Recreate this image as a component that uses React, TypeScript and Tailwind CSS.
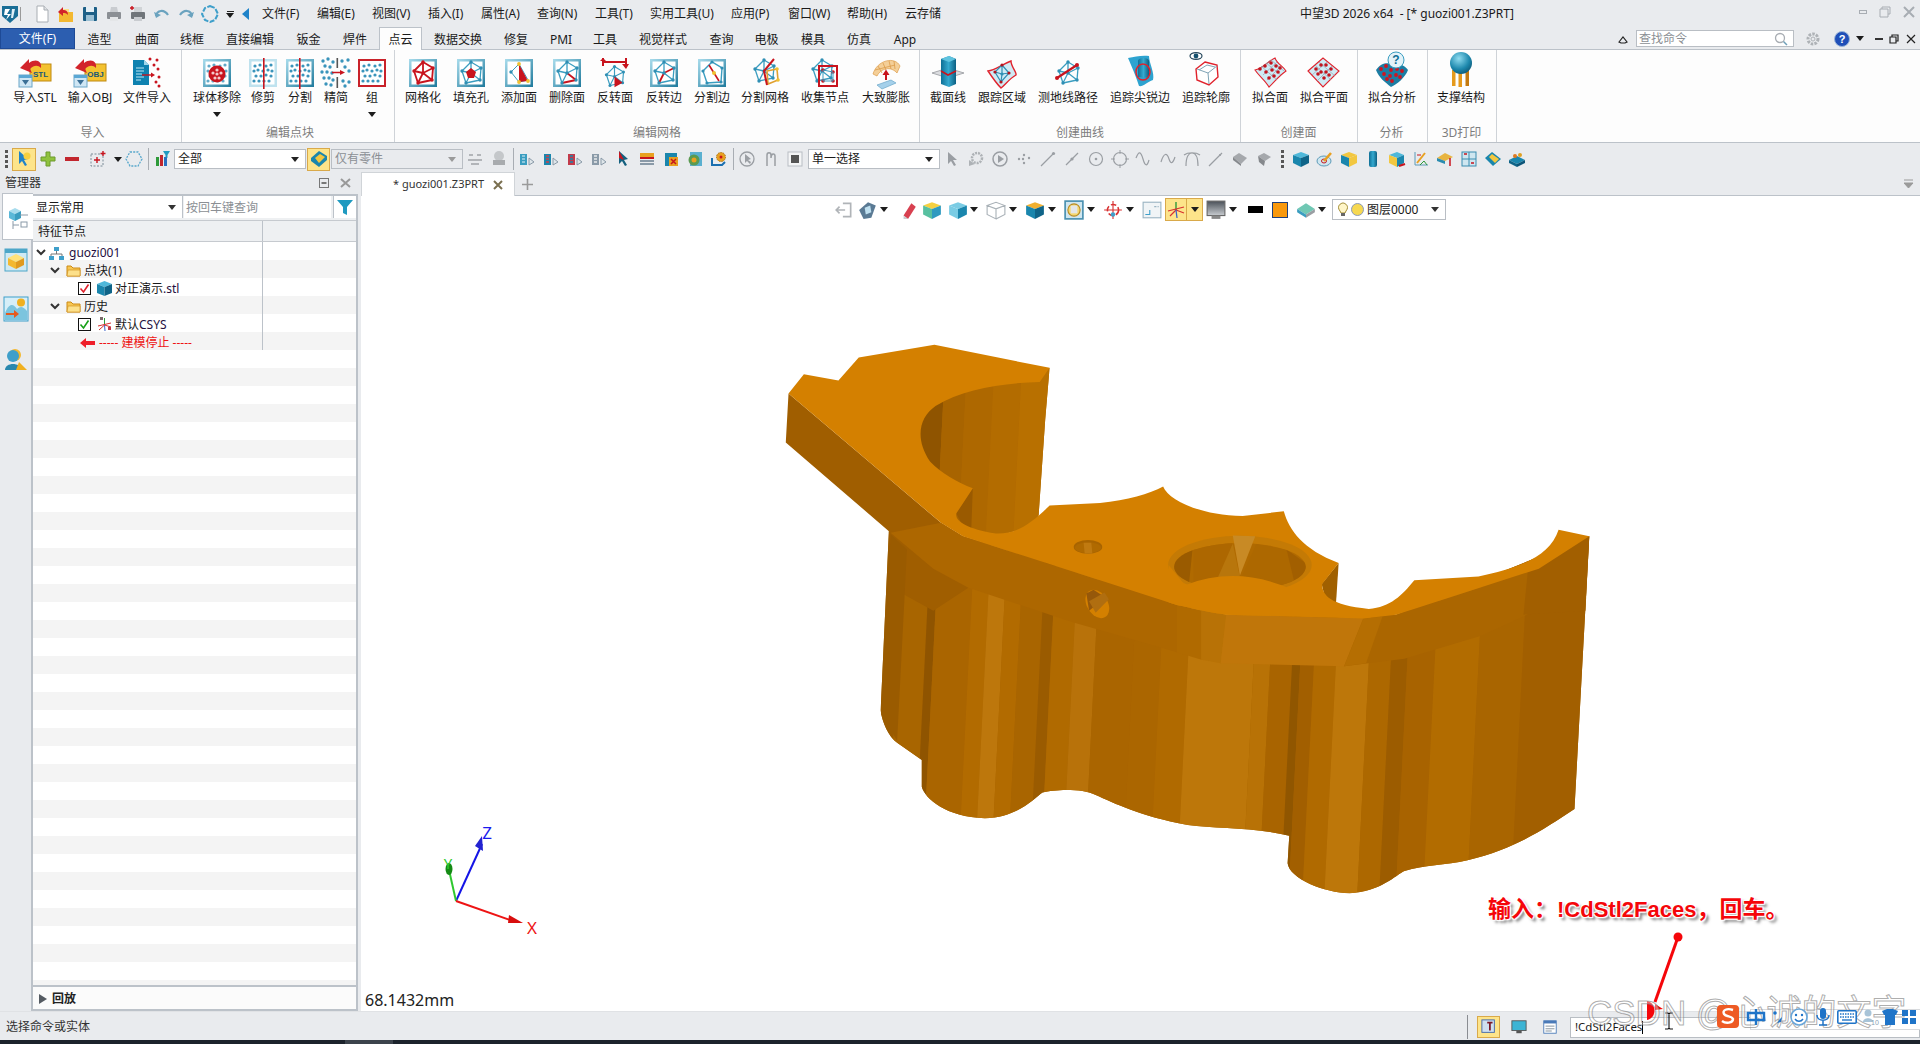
import React from "react";

const T = "#3a9dc0";
const R = "#c8141e";

const Defs = () => (
  <svg width="0" height="0" className="absolute">
    <defs>
      <linearGradient id="fr" x1="0" y1="0" x2="1" y2="1">
        <stop offset="0" stopColor="#a9dcec" />
        <stop offset="1" stopColor="#1f7a9c" />
      </linearGradient>
      <linearGradient id="blk" x1="0" y1="0" x2="1" y2="0">
        <stop offset="0" stopColor="#0f6f96" />
        <stop offset="0.5" stopColor="#35a9cf" />
        <stop offset="1" stopColor="#0c5f82" />
      </linearGradient>
      <radialGradient id="sph" cx="0.4" cy="0.3" r="0.8">
        <stop offset="0" stopColor="#8fdcf0" />
        <stop offset="0.6" stopColor="#1d88ad" />
        <stop offset="1" stopColor="#0b4f6c" />
      </radialGradient>
      <linearGradient id="mon" x1="0" y1="0" x2="0" y2="1">
        <stop offset="0" stopColor="#4a5058" />
        <stop offset="1" stopColor="#c8ccd0" />
      </linearGradient>
    </defs>
  </svg>
);

const Ic = ({ children, w = 30, h = 30 }: { children: React.ReactNode; w?: number; h?: number }) => (
  <svg width={w} height={h} viewBox={`0 0 ${w} ${h}`} className="block shrink-0 overflow-visible">
    {children}
  </svg>
);

const Frame = ({ children }: { children?: React.ReactNode }) => (
  <Ic>
    <rect x="1" y="1" width="28" height="28" fill="url(#fr)" />
    <rect x="3.5" y="3.5" width="23" height="23" fill="#fff" />
    {children}
  </Ic>
);

const PTS = [
  [15, 4],
  [25, 10],
  [24, 22],
  [10, 25],
  [6, 13],
  [15, 15],
];
const EDGES: [number, number][] = [
  [0, 1],
  [1, 2],
  [2, 3],
  [3, 4],
  [4, 0],
  [5, 0],
  [5, 1],
  [5, 2],
  [5, 3],
  [5, 4],
];

const Net = ({ red = [], yellow = [], dx = 0, dy = 0 }: { red?: number[]; yellow?: number[]; dx?: number; dy?: number }) => (
  <g transform={`translate(${dx} ${dy})`}>
    {EDGES.map((e, i) => (
      <line
        key={i}
        x1={PTS[e[0]][0]}
        y1={PTS[e[0]][1]}
        x2={PTS[e[1]][0]}
        y2={PTS[e[1]][1]}
        stroke={red.includes(i) ? R : T}
        strokeWidth={red.includes(i) ? 1.8 : 1.3}
      />
    ))}
    {PTS.map((p, i) => (
      <circle key={i} cx={p[0]} cy={p[1]} r="1.7" fill={yellow.includes(i) ? "#f0c030" : red.length > 4 ? R : "#2f8fb4"} />
    ))}
  </g>
);

const DOTS = [
  [7, 8],
  [12, 7],
  [18, 8],
  [23, 7],
  [6, 13],
  [10, 12],
  [15, 13],
  [20, 12],
  [24, 13],
  [8, 18],
  [13, 18],
  [18, 17],
  [23, 18],
  [6, 23],
  [11, 23],
  [16, 23],
  [21, 23],
];
const Dots = ({ o = 1 }: { o?: number }) => (
  <g opacity={o}>
    {DOTS.map((d, i) => (
      <circle key={i} cx={d[0]} cy={d[1]} r="1.6" fill="#3a94bb" />
    ))}
  </g>
);

const ImportIcon = ({ label }: { label: string }) => (
  <Ic w={34} h={32}>
    <rect x="12" y="8" width="21" height="17" fill="#f3c230" stroke="#c08a10" />
    <text x="22.5" y="21" textAnchor="middle" fontSize="8" fontWeight="700" fill="#16587a" fontFamily="Liberation Sans">
      {label}
    </text>
    <path d="M2 12 L11 3 L11 7 C18 2 24 5 23 12 C20 9 16 9 12 13 L14 17 Z" fill="#d2232a" />
    <rect x="1" y="19" width="13" height="12" fill="#cfe6f4" stroke="#6aa6c8" />
    <rect x="1" y="19" width="13" height="3" fill="#5aa7d4" />
    <path d="M4 24 L11 24 L7.5 29 Z" fill="#3b6f96" />
  </Ic>
);

const FileImport = () => (
  <Ic w={34} h={32}>
    <path d="M3 4 L14 4 L19 9 L19 29 L3 29 Z" fill="#0f82b0" />
    <path d="M14 4 L19 9 L14 9 Z" fill="#9fd6ea" />
    <path d="M6 12 H14 M6 15 H14 M6 18 H12 M6 21 H14 M6 24 H11" stroke="#bfe7f4" strokeWidth="1" />
    <path d="M12 19 H22" stroke={R} strokeWidth="1.4" />
    <path d="M21 16.5 L25 19 L21 21.5 Z" fill={R} />
    <g fill={R}>
      <circle cx="20" cy="3" r="1.5" />
      <circle cx="27" cy="4" r="1.5" />
      <circle cx="24" cy="9" r="1.5" />
      <circle cx="28" cy="13" r="1.5" />
      <circle cx="29" cy="21" r="1.5" />
      <circle cx="26" cy="26" r="1.5" />
      <circle cx="29" cy="30" r="1.5" />
    </g>
  </Ic>
);

const icons: Record<string, React.ReactNode> = {
  stl: <ImportIcon label="STL" />,
  obj: <ImportIcon label="OBJ" />,
  file: <FileImport />,
  sphere: (
    <Frame>
      <Dots o={0.8} />
      <circle cx="15" cy="16" r="8.5" fill={R} />
      {[[15, 12], [11, 15], [19, 15], [13, 20], [17, 20], [15, 16]].map((d, i) => (
        <circle key={i} cx={d[0]} cy={d[1]} r="1.6" fill="#f4c9cb" />
      ))}
    </Frame>
  ),
  trim: (
    <Ic>
      <rect x="1" y="1" width="28" height="28" fill="#bfe2ee" />
      <rect x="3.5" y="3.5" width="23" height="23" fill="#fff" />
      <Dots />
      <rect x="15" y="0" width="1.6" height="31" fill={R} />
    </Ic>
  ),
  split: (
    <Frame>
      <Dots />
      <rect x="14" y="0" width="1.6" height="31" fill={R} />
    </Frame>
  ),
  simplify: (
    <Ic>
      <g fill="#3a94bb">
        {[[2, 3], [7, 1], [12, 4], [4, 8], [9, 9], [1, 14], [6, 14], [11, 15], [3, 20], [8, 20], [12, 22], [5, 26], [10, 27], [21, 3], [27, 2], [24, 9], [28, 13], [22, 23], [28, 24], [24, 28]].map((d, i) => (
          <circle key={i} cx={d[0]} cy={d[1]} r="1.7" />
        ))}
      </g>
      <rect x="15.5" y="0" width="1.6" height="10" fill="#555" />
      <rect x="15.5" y="19" width="1.6" height="11" fill="#555" />
      <path d="M11 14.5 H20" stroke={R} strokeWidth="1.5" />
      <path d="M19 12 L24 14.5 L19 17 Z" fill={R} />
    </Ic>
  ),
  group: (
    <Ic>
      <rect x="2" y="2" width="26" height="26" fill="#fff" stroke="#c9222a" strokeWidth="2" />
      <Dots />
    </Ic>
  ),
  meshify: (
    <Frame>
      <Net red={[0, 1, 2, 3, 4, 5, 6, 7, 8, 9]} />
    </Frame>
  ),
  fill: (
    <Frame>
      <Net />
      <path d="M15 10 L20 14 L18 20 L12 20 L10 14 Z" fill={R} />
    </Frame>
  ),
  addf: (
    <Frame>
      <path d="M7 14 L15 6 L24 22 L15 24 Z" fill="none" stroke={T} />
      <path d="M15 6 L24 23 L15 24 Z" fill={R} />
      <g fill="#f0c030">
        <circle cx="15" cy="6" r="1.9" />
        <circle cx="24" cy="23" r="1.9" />
        <circle cx="15" cy="24" r="1.9" />
      </g>
      <circle cx="7" cy="14" r="1.7" fill="#2f8fb4" />
    </Frame>
  ),
  delf: (
    <Frame>
      <Net red={[7, 2]} />
    </Frame>
  ),
  flipf: (
    <Ic>
      <path d="M3 0 V8 M3 4 H26 M26 0 V9" stroke={R} strokeWidth="2" />
      <path d="M0 3 L3 0 L6 3 Z" fill={R} />
      <path d="M22 6 L29 6 L26 11 Z" fill={R} />
      <g transform="translate(1 5) scale(0.9)">
        <Net />
        <path d="M15 15 L24 22 L15 27 Z" fill={R} />
      </g>
    </Ic>
  ),
  flipe: (
    <Frame>
      <Net red={[6, 8]} />
    </Frame>
  ),
  splite: (
    <Frame>
      <path d="M6 13 L15 4 L25 10 L24 24 L10 25 Z" fill="none" stroke={T} strokeWidth="1.4" />
      <path d="M12 7 L22 23" stroke={R} strokeWidth="1.6" />
      <circle cx="17" cy="15" r="2" fill="#f0c030" />
      {[[6, 13], [15, 4], [25, 10], [24, 24], [10, 25]].map((d, i) => (
        <circle key={i} cx={d[0]} cy={d[1]} r="1.6" fill="#2f8fb4" />
      ))}
    </Frame>
  ),
  splitm: (
    <Ic w={30} h={32}>
      <Net dx={-1} dy={0} />
      <path d="M17 15 L27 13 L28 24 L18 28 Z" fill="none" stroke="#e0a030" strokeWidth="1.6" />
      <path d="M24 3 L14 15 L17 29" fill="none" stroke={R} strokeWidth="2" />
      <circle cx="27" cy="13" r="1.8" fill="#f0c030" />
      <circle cx="28" cy="24" r="1.8" fill="#f0c030" />
    </Ic>
  ),
  collect: (
    <Ic>
      <Net dx={-3} dy={-2} />
      <rect x="9" y="8" width="18" height="20" fill="none" stroke={R} strokeWidth="2" />
      <g fill={R}>
        <circle cx="13" cy="12" r="1.8" />
        <circle cx="23" cy="14" r="1.8" />
        <circle cx="13" cy="23" r="1.8" />
        <circle cx="23" cy="23" r="1.8" />
      </g>
      <path d="M13 12 L23 14 L23 23 L13 23 Z" fill="none" stroke={T} />
    </Ic>
  ),
  inflate: (
    <Ic>
      <path d="M2 16 C6 2 24 -2 29 8 L26 15 C20 8 10 10 6 18 Z" fill="#f4cf98" stroke="#dc9c4a" strokeWidth="0.7" />
      <path d="M7 8 L11 15 M12 5 L15 12 M18 3 L20 11 M23 3 L24 11 M4 12 L24 7" stroke="#dc9c4a" strokeWidth="0.8" />
      <path d="M15 22 V15" stroke={R} strokeWidth="2" />
      <path d="M11.5 17 L15 11.5 L18.5 17 Z" fill={R} />
      <path d="M6 27 L20 22 L25 25 L11 31 Z" fill="#a5d0ea" stroke="#6aa6c8" strokeWidth="0.7" />
    </Ic>
  ),
  section: (
    <Ic w={34} h={32}>
      <path d="M1 17 L17 12 L33 17 L17 22 Z" fill="#dcdde0" stroke="#8a8d92" strokeWidth="0.7" />
      <path d="M10 3 L18 0 L25 3 L25 28 L18 31 L10 28 Z" fill="url(#blk)" />
      <path d="M10 3 L18 0 L25 3 L18 6 Z" fill="#5fc3df" />
      <path d="M10 15 L17 19 L25 15" fill="none" stroke={R} strokeWidth="1.6" />
    </Ic>
  ),
  region: (
    <Ic>
      <path d="M1 13 C8 12 14 7 24 3 C24 9 30 14 29 17 C22 21 18 27 14 30 C10 26 5 19 1 13 Z" fill="#cfeaf4" stroke="#e0222c" strokeWidth="1.4" />
      <path d="M15 7 L22 15 L14 24 L8 14 Z M15 7 L15 16 M22 15 L15 16 M14 24 L15 16 M8 14 L15 16" fill="none" stroke="#2f8fb4" strokeWidth="1.2" />
      <g fill="#b01620">
        <circle cx="15" cy="7" r="1.6" />
        <circle cx="22" cy="15" r="1.6" />
        <circle cx="14" cy="24" r="1.6" />
        <circle cx="8" cy="14" r="1.6" />
      </g>
      <circle cx="15" cy="16" r="1.6" fill="#2f8fb4" />
    </Ic>
  ),
  geo: (
    <Ic>
      <Net />
      <path d="M4 20 L24 7" stroke={R} strokeWidth="2.2" />
      <circle cx="4" cy="20" r="2" fill={R} />
      <circle cx="24" cy="7" r="2" fill={R} />
    </Ic>
  ),
  sharp: (
    <Ic w={30} h={33}>
      <path d="M3 3 C10 2 16 0 24 1 C24 8 30 18 28 25 C22 27 18 32 14 31 C12 24 7 12 3 3 Z" fill="#2da3d0" />
      <path d="M13 6 C13 2 24 2 24 6 L24 23 L13 22 Z" fill="url(#blk)" />
      <ellipse cx="18" cy="17" rx="7" ry="8" fill="none" stroke="#e0222c" strokeWidth="1.5" />
    </Ic>
  ),
  trace: (
    <Ic w={36} h={36}>
      <ellipse cx="8" cy="4" rx="6" ry="3.4" fill="#fff" stroke="#26475c" strokeWidth="1.2" />
      <circle cx="8" cy="4" r="2.4" fill="#14506e" />
      <path d="M17 10 L29 13 L30 25 L21 33 L9 28 L8 17 Z" fill="#fff" stroke="#e0222c" strokeWidth="1.4" />
      <path d="M9 17 L20 21 L29 14 M20 21 L21 32 M11 18 L19 13 L27 15" fill="none" stroke="#7fa4b6" strokeWidth="1" />
    </Ic>
  ),
  fit: (
    <Ic w={34} h={32}>
      <path d="M2 14 C10 12 14 6 22 2 C24 8 30 10 33 15 C26 20 22 25 16 31 C12 24 6 20 2 14 Z" fill="#cfeaf4" stroke="#e0222c" strokeWidth="1.1" />
      <path d="M8 10 L24 24 M13 7 L28 19 M18 4 L31 15 M5 14 L18 4 M10 19 L24 6 M14 24 L28 10" stroke="#8a9aa8" strokeWidth="0.6" />
      {[[7, 13], [12, 10], [18, 7], [23, 10], [13, 16], [19, 14], [25, 16], [16, 22], [21, 20], [27, 12]].map((d, i) => (
        <circle key={i} cx={d[0]} cy={d[1]} r="1.8" fill="#c2141e" />
      ))}
    </Ic>
  ),
  fitp: (
    <Ic w={34} h={32}>
      <path d="M1 15 L16 2 L32 15 L16 31 Z" fill="#cfeaf4" stroke="#e0222c" strokeWidth="1.1" />
      <path d="M8 9 L24 24 M12 6 L28 20 M20 6 L5 19 M25 10 L10 25" stroke="#8a9aa8" strokeWidth="0.6" />
      {[[9, 13], [14, 9], [19, 9], [14, 16], [19, 16], [24, 13], [17, 22], [22, 19], [11, 18]].map((d, i) => (
        <circle key={i} cx={d[0]} cy={d[1]} r="1.8" fill="#c2141e" />
      ))}
    </Ic>
  ),
  analyze: (
    <Ic w={34} h={36}>
      <path d="M1 18 C6 10 14 10 20 13 C25 11 30 14 33 18 C30 26 22 32 16 35 C10 30 4 26 1 18 Z" fill="#1c7da3" />
      {[[6, 17], [11, 14], [16, 18], [22, 17], [27, 19], [9, 22], [15, 24], [21, 23], [17, 29], [25, 25], [12, 27]].map((d, i) => (
        <circle key={i} cx={d[0]} cy={d[1]} r="1.9" fill="#cf1520" />
      ))}
      <circle cx="21" cy="8" r="8" fill="#e4f3f9" stroke="#3a9dc0" />
      <text x="21" y="12" textAnchor="middle" fontSize="12" fontWeight="700" fill="#0f6f96" fontFamily="Liberation Sans">
        ?
      </text>
    </Ic>
  ),
  support: (
    <Ic w={30} h={36}>
      <rect x="6" y="18" width="3.5" height="16" fill="#e59a1c" />
      <rect x="12.5" y="18" width="3.5" height="17" fill="#e59a1c" />
      <rect x="19.5" y="18" width="3.5" height="16" fill="#c47a10" />
      <circle cx="15" cy="11" r="11" fill="url(#sph)" />
    </Ic>
  ),
};

type Item = [string, string, string, boolean?];
type Group = { label: string; cls: string; items: Item[] };

const groups: Group[] = [
  {
    label: "导入",
    cls: "w-[182px] pl-2",
    items: [
      ["导入STL", "stl", "w-[54px]"],
      ["输入OBJ", "obj", "w-[56px]"],
      ["文件导入", "file", "w-[58px]"],
    ],
  },
  {
    label: "编辑点块",
    cls: "w-[213px] pl-2",
    items: [
      ["球体移除", "sphere", "w-[54px]", true],
      ["修剪", "trim", "w-[38px]"],
      ["分割", "split", "w-[36px]"],
      ["精简", "simplify", "w-[36px]"],
      ["组", "group", "w-[36px]", true],
    ],
  },
  {
    label: "编辑网格",
    cls: "w-[525px] pl-1",
    items: [
      ["网格化", "meshify", "w-[48px]"],
      ["填充孔", "fill", "w-[48px]"],
      ["添加面", "addf", "w-[48px]"],
      ["删除面", "delf", "w-[48px]"],
      ["反转面", "flipf", "w-[48px]"],
      ["反转边", "flipe", "w-[50px]"],
      ["分割边", "splite", "w-[46px]"],
      ["分割网格", "splitm", "w-[60px]"],
      ["收集节点", "collect", "w-[60px]"],
      ["大致膨胀", "inflate", "w-[62px]"],
    ],
  },
  {
    label: "创建曲线",
    cls: "w-[321px] pl-1",
    items: [
      ["截面线", "section", "w-[48px]"],
      ["跟踪区域", "region", "w-[60px]"],
      ["测地线路径", "geo", "w-[72px]"],
      ["追踪尖锐边", "sharp", "w-[72px]"],
      ["追踪轮廓", "trace", "w-[60px]"],
    ],
  },
  {
    label: "创建面",
    cls: "w-[117px] pl-[3px]",
    items: [
      ["拟合面", "fit", "w-[52px]"],
      ["拟合平面", "fitp", "w-[56px]"],
    ],
  },
  { label: "分析", cls: "w-[70px] pl-0.5", items: [["拟合分析", "analyze", "w-[64px]"]] },
  { label: "3D打印", cls: "w-[69px] pl-[3px]", items: [["支撑结构", "support", "w-[60px]"]] },
];

const Arrow = ({ c = "#1c1c1c" }: { c?: string }) => (
  <svg width="8" height="5" viewBox="0 0 8 5" className="block shrink-0">
    <path d="M0 0 H8 L4 5 Z" fill={c} />
  </svg>
);

const Sm = ({ children, s = 18 }: { children: React.ReactNode; s?: number }) => (
  <svg width={s} height={s} viewBox="0 0 18 18" className="block shrink-0">
    {children}
  </svg>
);

const Cube = ({ top = "#4fb8da", left = "#1a86ad", right = "#0f6488", s = 18 }: { top?: string; left?: string; right?: string; s?: number }) => (
  <Sm s={s}>
    <path d="M1 5 L9 2 L17 5 L9 8 Z" fill={top} />
    <path d="M1 5 L9 8 V17 L1 13 Z" fill={left} />
    <path d="M17 5 L9 8 V17 L17 13 Z" fill={right} />
  </Sm>
);

const Cell = ({ children, cls = "w-6" }: { children: React.ReactNode; cls?: string }) => (
  <div className={`${cls} h-full flex items-center justify-center shrink-0`}>{children}</div>
);

const Grip = () => (
  <div className="w-[3px] flex flex-col gap-[2px] shrink-0">
    <span className="block w-[3px] h-[3px] bg-[#555]" />
    <span className="block w-[3px] h-[3px] bg-[#555]" />
    <span className="block w-[3px] h-[3px] bg-[#555]" />
    <span className="block w-[3px] h-[3px] bg-[#555]" />
  </div>
);

const TSep = ({ cls = "" }: { cls?: string }) => <div className={`w-px h-[22px] bg-[#a8adb3] shrink-0 ${cls}`} />;

const Combo = ({ text, cls, gray }: { text: string; cls: string; gray?: boolean }) => (
  <div className={`${cls} h-[20px] shrink-0 flex items-center justify-between pl-[3px] pr-[6px] border border-[#b9bec4] ${gray ? "bg-[#e9ebee] text-[#8b8f94]" : "bg-white text-[#1a1a1a]"}`}>
    <span className="leading-none">{text}</span>
    <Arrow c={gray ? "#9a9a9a" : "#222"} />
  </div>
);

const g1 = "#aeb2b6";
const disabled: React.ReactNode[] = [
  <Sm key="a"><path d="M5 2 L5 14 L8 11 L11 16 L13 15 L10 10 L14 10 Z" fill="#9a9ea3" /></Sm>,
  <Sm key="b"><circle cx="10" cy="8" r="5" fill="none" stroke={g1} strokeWidth="2.5" strokeDasharray="2 1" /><path d="M2 10 L2 16 L8 14 Z" fill={g1} /></Sm>,
  <Sm key="c"><circle cx="9" cy="9" r="7" fill="none" stroke="#9a9ea3" strokeWidth="1.5" /><path d="M7 5 L13 9 L7 13 Z" fill="#9a9ea3" /></Sm>,
  <Sm key="d"><g fill="#9a9ea3"><circle cx="4" cy="9" r="1.2" /><circle cx="9" cy="5" r="1.2" /><circle cx="9" cy="13" r="1.2" /><circle cx="14" cy="8" r="1.2" /><circle cx="8" cy="9" r="1.2" /></g></Sm>,
  <Sm key="e"><path d="M2 16 L14 4" stroke="#9a9ea3" strokeWidth="1.2" /><circle cx="14.5" cy="3.5" r="1.6" fill="#9a9ea3" /></Sm>,
  <Sm key="f"><path d="M3 15 L15 3" stroke="#9a9ea3" strokeWidth="1.2" /><circle cx="9" cy="9" r="1.6" fill="#9a9ea3" /></Sm>,
  <Sm key="g"><circle cx="9" cy="9" r="6.5" fill="none" stroke="#9a9ea3" strokeWidth="1.2" /><circle cx="9" cy="9" r="1.3" fill="#9a9ea3" /></Sm>,
  <Sm key="h"><circle cx="9" cy="9" r="6.5" fill="none" stroke="#9a9ea3" strokeWidth="1.2" /><path d="M9 0 V4 M9 14 V18 M0 9 H4 M14 9 H18" stroke="#9a9ea3" /></Sm>,
  <Sm key="i"><path d="M1 8 C4 0 6 2 8 9 C10 16 12 17 14 10" fill="none" stroke="#9a9ea3" strokeWidth="1.2" /></Sm>,
  <Sm key="j"><path d="M2 12 C5 2 8 3 10 9 C12 15 14 13 16 7" fill="none" stroke="#9a9ea3" strokeWidth="1.2" /></Sm>,
  <Sm key="k"><path d="M3 16 C3 6 6 3 9 3 C12 3 15 6 15 16 M1 5 C5 2 13 2 17 5" fill="none" stroke="#9a9ea3" strokeWidth="1.2" /></Sm>,
  <Sm key="l"><path d="M2 16 L15 3" stroke="#9a9ea3" strokeWidth="1.2" /><circle cx="13" cy="5" r="1" fill="#9a9ea3" /></Sm>,
  <Sm key="m"><path d="M2 7 L8 3 L16 8 L10 14 Z" fill="#a5a8ac" /><path d="M2 7 L10 14 V16 L2 10 Z" fill="#85888c" /></Sm>,
  <Sm key="n"><path d="M3 6 L9 3 L16 7 L10 11 Z" fill="#a5a8ac" /><path d="M3 6 L10 11 L9 16 L4 12 Z" fill="#85888c" /></Sm>,
];

const blue: React.ReactNode[] = [
  <Cube key="a" />,
  <Sm key="b"><ellipse cx="8" cy="11" rx="7" ry="5" fill="#cfe6f0" stroke="#5c9ab8" /><ellipse cx="8" cy="11" rx="2.5" ry="2" fill="none" stroke={R} /><path d="M8 11 L15 3" stroke="#e8a020" strokeWidth="2.5" /></Sm>,
  <Cube key="c" top="#f2c740" left="#1a86ad" right="#f2c740" />,
  <Sm key="d"><rect x="5" y="1" width="8" height="16" rx="2" fill="url(#blk)" /></Sm>,
  <Sm key="e"><path d="M1 5 L9 2 L16 5 L9 8 Z" fill="#4fb8da" /><path d="M1 5 L9 8 V17 L1 13 Z" fill="#f2c740" /><path d="M16 5 L9 8 V17 L16 13 Z" fill="#1a86ad" /><path d="M11 16 L17 14" stroke={R} strokeWidth="2" /></Sm>,
  <Sm key="f"><path d="M3 2 V15 H16" fill="none" stroke="#5c9ab8" /><path d="M5 13 L13 3" stroke="#e8a020" strokeWidth="2" /><path d="M5 5 H9" stroke={R} /><path d="M8 15 L12 11 L15 15" stroke="#2e9a3a" fill="none" /></Sm>,
  <Sm key="g"><path d="M1 8 L9 3 L17 7 L9 11 Z" fill="#e8b440" /><path d="M1 8 L9 11 V14 L1 11 Z" fill="#2a8cb0" /><path d="M14 8 V16" stroke={R} strokeWidth="1.5" /></Sm>,
  <Sm key="h"><rect x="2" y="2" width="14" height="14" fill="#cfe6f0" stroke="#3a8cb0" /><path d="M9 2 V16 M2 9 H16" stroke="#3a8cb0" /><path d="M4 4 H7 M11 13 H14" stroke={R} strokeWidth="1.5" /></Sm>,
  <Sm key="i"><path d="M1 8 L8 2 L17 9 L9 16 Z" fill="#1a86ad" /><path d="M5 7 L8 4 L15 9 L11 13 Z" fill="#f2c740" /></Sm>,
  <Sm key="j"><path d="M1 10 L9 6 L17 10 L9 14 Z" fill="#1a86ad" /><path d="M1 10 L9 14 V17 L1 13 Z" fill="#0f6488" /><path d="M17 10 L9 14 V17 L17 13 Z" fill="#0c5578" /><circle cx="7" cy="6" r="2" fill="#e07a20" /><circle cx="12" cy="5" r="2" fill="#e0a020" /></Sm>,
];

const midIcons: React.ReactNode[] = [
  <Sm key="a"><path d="M2 4 H9 V15 H2 Z" fill="#3a9dc0" /><path d="M4 6 H7 M4 9 H7 M4 12 H7" stroke="#dff2f8" strokeWidth="1.2" /><path d="M11 8 L16 12 L11 15 Z" fill="#dfe6ea" stroke="#8a9aa8" /></Sm>,
  <Sm key="b"><path d="M2 4 H9 V15 H2 Z" fill="#1a86ad" /><path d="M4 6 H7 M4 9 H7 M4 12 H7" stroke="#d0404a" strokeWidth="1.5" /><path d="M11 8 L16 12 L11 15 Z" fill="#dfe6ea" stroke="#8a9aa8" /></Sm>,
  <Sm key="c"><path d="M2 4 H9 V15 H2 Z" fill="#c23a4a" /><path d="M4 6 H7 M4 9 H7 M4 12 H7" stroke="#1a86ad" strokeWidth="1.5" /><path d="M11 8 L16 12 L11 15 Z" fill="#dfe6ea" stroke="#8a9aa8" /></Sm>,
  <Sm key="d"><path d="M2 4 H9 V15 H2 Z" fill="#8a9aa8" /><path d="M4 6 H7 M4 9 H7 M4 12 H7" stroke="#e8eaec" strokeWidth="1.5" /><path d="M11 8 L16 12 L11 15 Z" fill="#dfe6ea" stroke="#8a9aa8" /></Sm>,
  <Sm key="e"><path d="M5 1 L5 14 L8 11 L11 16 L13 15 L10 10 L14 9 Z" fill="#14607f" /><path d="M5 1 L5 8 L10 10 Z" fill={R} /></Sm>,
  <Sm key="f"><rect x="2" y="3" width="14" height="4" fill="#e8a020" /><rect x="2" y="7" width="14" height="2" fill={R} /><path d="M2 11 H16 M2 14 H16" stroke="#8a9aa8" strokeWidth="2" /></Sm>,
  <Sm key="g"><rect x="3" y="3" width="12" height="13" fill="#1a86ad" /><rect x="7" y="7" width="9" height="9" fill="#e8a020" /><path d="M9 9 L14 14 M14 9 L9 14" stroke={R} strokeWidth="1.5" /></Sm>,
  <Sm key="h"><rect x="4" y="2" width="12" height="14" fill="#5ab0d0" /><circle cx="8" cy="10" r="5.5" fill="#5a9a50" /><circle cx="8" cy="10" r="2.5" fill="#e8a020" /></Sm>,
  <Sm key="i"><circle cx="11" cy="7" r="4.5" fill="#e8a020" stroke="#a86f10" strokeDasharray="1.5 1" /><path d="M2 8 V15 H12 L15 12" fill="none" stroke="#1a6fb0" strokeWidth="2" /><circle cx="11" cy="7" r="1.5" fill={R} /></Sm>,
];

const Folder = () => (
  <svg width="15" height="13" viewBox="0 0 15 13" className="block shrink-0">
    <path d="M1 2 H5 L7 4 H14 V12 H1 Z" fill="#f7c652" stroke="#cc8a14" />
    <path d="M2 6 H14 V12 H1 Z" fill="#fce08a" stroke="#cc8a14" strokeWidth="0.6" />
  </svg>
);
const Chev = () => (
  <svg width="10" height="7" viewBox="0 0 10 7" className="block shrink-0">
    <path d="M1 1 L5 5 L9 1" fill="none" stroke="#333" strokeWidth="2" />
  </svg>
);
const Check = ({ c }: { c: string }) => (
  <svg width="13" height="13" viewBox="0 0 13 13" className="block shrink-0">
    <rect x="0.5" y="0.5" width="12" height="12" fill="#fff" stroke="#111" />
    <path d="M2.5 6.5 L5.5 10 L10.5 2.5" fill="none" stroke={c} strokeWidth="1.6" />
  </svg>
);

const Row = ({ i, children }: { i: number; children?: React.ReactNode }) => (
  <div className={`h-[18px] shrink-0 flex ${i % 2 ? "bg-[#f4f4f4]" : "bg-white"}`}>
    {children !== undefined ? (
      <>
        <div className="w-[230px] shrink-0 pt-[3px] border-r border-[#bcc2c9] flex items-center relative">{children}</div>
      </>
    ) : null}
  </div>
);

const stripe = (x: number, w: number, c: string, k: string | number) => {
  const s = -0.035;
  const x0 = x - s * (900 - 0);
  const x1 = x - s * (900 - 1568);
  return <polygon key={k} points={`${x0},0 ${x0 + w},0 ${x1 + w},1568 ${x1},1568`} fill={c} />;
};

const wall: [number, number, string][] = [
  [200, 50, "#9a5b00"],
  [250, 50, "#a86500"],
  [300, 15, "#8f5400"],
  [315, 65, "#aa6500"],
  [380, 30, "#b26b00"],
  [410, 30, "#bd770c"],
  [440, 30, "#b26b00"],
  [470, 40, "#a96500"],
  [510, 20, "#9a5b00"],
  [530, 40, "#b06a00"],
  [570, 40, "#b8720a"],
  [610, 70, "#aa6500"],
  [680, 50, "#ab6600"],
  [730, 50, "#b06a00"],
  [780, 120, "#bd770a"],
  [900, 30, "#b87206"],
  [930, 40, "#a96400"],
  [970, 15, "#905600"],
  [985, 25, "#a25f00"],
  [1010, 40, "#b06a00"],
  [1050, 60, "#bd770a"],
  [1110, 40, "#ad6800"],
  [1150, 30, "#9c5c00"],
  [1180, 50, "#a86300"],
  [1230, 80, "#b26c00"],
  [1310, 80, "#a96500"],
  [1390, 160, "#a25f00"],
];

const TOP =
  "M52,192 L80,142 L143,158 L180,98 L318,65 L528,125 L510,162 C440,165 370,180 320,225 C290,255 282,310 310,370 C330,400 360,425 388,440 L358,505 C355,525 375,545 430,558 C470,560 495,530 528,485 L620,478 C670,470 710,455 735,435 C745,470 800,510 880,512 L955,500 C965,550 990,600 1055,635 L1025,690 C1025,720 1040,745 1110,755 C1150,750 1170,720 1193,680 L1310,670 C1380,650 1440,620 1456,548 L1512,565 L1420,650 L1160,770 L1100,780 L850,770 C800,760 780,750 760,745 L370,565 L330,530 Z";

const WALL =
  "M235,552 L220,1020 C222,1050 235,1090 250,1105 L295,1150 L295,1220 C300,1250 340,1300 410,1302 C470,1300 500,1250 515,1235 C540,1225 590,1225 610,1240 C650,1265 690,1295 780,1320 C830,1330 900,1325 965,1348 L962,1420 C965,1460 1030,1498 1075,1498 C1130,1495 1160,1450 1175,1440 C1210,1425 1250,1425 1290,1412 C1380,1380 1430,1330 1485,1278 L1512,565 L1160,770 L850,770 L370,565 Z";

const CAV = "M505,150 L528,125 L520,260 L508,510 L495,540 L430,565 L370,550 L340,510 L300,450 L270,300 L310,210 L400,160 Z";

const Model = () => (
  <svg viewBox="0 0 1568 1568" preserveAspectRatio="none" className="absolute left-[399px] top-[124px] w-[860px] h-[600px]">
    <defs>
      <clipPath id="wallc">
        <path d={WALL} />
      </clipPath>
      <clipPath id="topc">
        <path d={TOP} />
      </clipPath>
      <clipPath id="holec">
        <ellipse cx="875" cy="645" rx="120" ry="62" />
      </clipPath>
      <clipPath id="cylc">
        <path d={CAV} />
      </clipPath>
    </defs>
    <path d={CAV} fill="#b06a00" />
    <g clipPath="url(#cylc)">
      {[
        [250, 60, "#8f5400"],
        [310, 40, "#a86400"],
        [350, 50, "#ae6800"],
        [400, 50, "#b36c00"],
        [450, 55, "#b87000"],
        [505, 30, "#9c5c00"],
      ].map((s, i) => stripe(Number(s[0]), Number(s[1]), String(s[2]), i))}
      <polygon points="358,505 388,440 385,555 370,540" fill="#9a5a00" />
    </g>
    <polygon points="1055,635 1050,745 1030,725 1024,690" fill="#a06000" />
    <path d={WALL} fill="#a86500" />
    <g clipPath="url(#wallc)">{wall.map((s, i) => stripe(s[0], s[1], s[2], i))}</g>
    <polygon points="52,192 47,320 235,552 240,700 316,760 380,700 370,565 330,530" fill="#a05e00" />
    <polygon points="238,560 268,600 250,1100 222,1030" fill="#9a5b00" />
    <polygon points="330,530 370,565 760,745 760,868 680,835 570,790 380,700 316,650 238,556" fill="#ad6700" />
    <polygon points="760,745 805,760 805,888 760,868" fill="#b06a00" />
    <polygon points="805,758 850,770 840,897 805,888" fill="#b87206" />
    <polygon points="850,770 1100,780 1065,905 840,897" fill="#c0760a" />
    <polygon points="1100,780 1160,770 1420,650 1512,565 1505,700 1315,825 1175,885 1065,905" fill="#ab6600" />
    <polygon points="1100,780 1135,775 1105,897 1065,905" fill="#b56e02" />
    <polygon points="1400,655 1512,565 1505,760 1392,770" fill="#a25f00" />
    <path d={TOP} fill="#d48000" />
    <g clipPath="url(#topc)">
      <ellipse cx="875" cy="640" rx="131" ry="76" fill="#c47a05" />
      <ellipse cx="875" cy="645" rx="120" ry="62" fill="#b06a00" />
      <g clipPath="url(#holec)">
        <polygon points="755,580 790,580 780,720 755,720" fill="#9a5b00" />
        <polygon points="790,580 862,580 835,700 790,700" fill="#ad6700" />
        <polygon points="905,585 960,600 980,720 875,680" fill="#ad6800" />
        <polygon points="960,600 1000,640 980,720" fill="#a25f00" />
        <polygon points="862,585 875,672 835,672" fill="#b8760c" />
      </g>
      <polygon points="862,563 903,565 875,668" fill="#c88a25" />
      <path d="M745,640 L775,693 Q870,640 972,705 L1005,660 L1010,790 L745,790 Z" fill="#d48000" />
    </g>
    <ellipse cx="598" cy="593" rx="26" ry="18" fill="#a86400" />
    <ellipse cx="598" cy="595" rx="24" ry="14" fill="#b06a00" />
    <polygon points="590,582 604,582 606,610 592,610" fill="#c07a10" />
    <ellipse cx="615" cy="742" rx="20" ry="38" transform="rotate(-15 615 742)" fill="#d48000" />
    <path d="M595,715 L608,705 L630,725 L600,760 Z" fill="#96580a" />
    <path d="M600,735 L628,712 L636,730 L612,765 Z" fill="#b06e10" />
  </svg>
);

const Axis = () => (
  <svg width="120" height="120" viewBox="0 0 120 120" className="absolute left-[60px] top-[630px] overflow-visible">
    <line x1="35" y1="75" x2="61" y2="18" stroke="#1414e6" strokeWidth="2" />
    <path d="M54 20 L61 10 L62 25 Z" fill="#2222d0" />
    <line x1="35" y1="75" x2="28" y2="44" stroke="#2ec82e" strokeWidth="2" />
    <ellipse cx="28" cy="43" rx="3.5" ry="6" fill="#148a14" />
    <line x1="35" y1="75" x2="92" y2="95" stroke="#ee1414" strokeWidth="2" />
    <path d="M88 89 L102 97 L87 97 Z" fill="#d80e0e" />
    <text x="66" y="13" textAnchor="middle" fontSize="17" fill="#1a1aee" fontFamily="Noto Sans">Z</text>
    <text x="27" y="43" textAnchor="middle" fontSize="15" fill="#2ec82e" fontFamily="Noto Sans">Y</text>
    <text x="111" y="108" textAnchor="middle" fontSize="17" fill="#ee1414" fontFamily="Noto Sans">X</text>
  </svg>
);

export default function App() {
  const menu: [string, string][] = [
    ["文件(F)", "w-[55px]"],
    ["编辑(E)", "w-[55px]"],
    ["视图(V)", "w-[56px]"],
    ["插入(I)", "w-[53px]"],
    ["属性(A)", "w-[56px]"],
    ["查询(N)", "w-[58px]"],
    ["工具(T)", "w-[55px]"],
    ["实用工具(U)", "w-[81px]"],
    ["应用(P)", "w-[57px]"],
    ["窗口(W)", "w-[59px]"],
    ["帮助(H)", "w-[58px]"],
    ["云存储", "w-[395px]"],
  ];
  const tabs: [string, string][] = [
    ["造型", "w-[49px]"],
    ["曲面", "w-[46px]"],
    ["线框", "w-[44px]"],
    ["直接编辑", "w-[72px]"],
    ["钣金", "w-[45px]"],
    ["焊件", "w-[48px]"],
    ["点云", "w-[43px]"],
    ["数据交换", "w-[72px]"],
    ["修复", "w-[44px]"],
    ["PMI", "w-[46px]"],
    ["工具", "w-[42px]"],
    ["视觉样式", "w-[74px]"],
    ["查询", "w-[43px]"],
    ["电极", "w-[47px]"],
    ["模具", "w-[46px]"],
    ["仿真", "w-[46px]"],
    ["App", "w-[46px]"],
  ];
  const rows = Array.from({ length: 42 }, (_, i) => i);

  return (
    <div className="relative w-[1920px] h-[1044px] overflow-hidden flex flex-col bg-[#e9ebee] text-[12px] text-[#1a1a1a] [font-family:'Noto_Sans','Noto_Sans_CJK_SC',sans-serif]">
      <Defs />
      {/* title bar */}
      <div className="h-[28px] shrink-0 flex items-center">
        <Cell cls="w-[20px]">
          <svg width="18" height="20" viewBox="0 0 18 20">
            <path d="M1 2 H17 V12 L9 19 L1 12 Z" fill="#1a6e96" />
            <path d="M4 5 L9 5 L6 10 L10 10 L5 16 L7 11 L3 11 Z" fill="#fff" />
            <path d="M11 5 H14 L12 14 H10 Z" fill="#dfeef6" />
          </svg>
        </Cell>
        <div className="w-px h-[14px] bg-[#9a9a9a] shrink-0" />
        <div className="w-[9px] shrink-0" />
        <Cell>
          <Sm><path d="M4 1 H11 L15 5 V17 H4 Z" fill="#fff" stroke="#a8adb3" /><path d="M11 1 V5 H15" fill="#e0e3e6" stroke="#a8adb3" /></Sm>
        </Cell>
        <Cell>
          <Sm><path d="M2 7 H16 V17 H2 Z" fill="#f3b830" /><path d="M2 7 L7 4 H12 V7" fill="#fbe08a" /><path d="M1 7 L6 2 V5 C9 5 11 6 11 10 C9 8 8 8 6 8 V11 Z" fill="#d2232a" /></Sm>
        </Cell>
        <Cell>
          <Sm><rect x="2" y="2" width="14" height="14" rx="1" fill="#1d5f86" /><rect x="5" y="2" width="8" height="5" fill="#e4eef4" /><rect x="5" y="10" width="8" height="6" fill="#9cc0d4" /></Sm>
        </Cell>
        <Cell>
          <Sm><rect x="2" y="7" width="14" height="7" rx="1" fill="#8b8f94" /><path d="M5 7 L6 2 H12 L13 7 Z" fill="#c9ccd0" /><rect x="5" y="12" width="8" height="4" fill="#e4e6e8" /></Sm>
        </Cell>
        <Cell>
          <Sm><rect x="2" y="7" width="14" height="7" rx="1" fill="#70757a" /><path d="M5 7 V2 H13 V7" fill="#d0d3d6" /><rect x="5" y="12" width="8" height="4" fill="#c9ccd0" /><path d="M3 1 V5 M1 3 H5" stroke={R} strokeWidth="1.4" /></Sm>
        </Cell>
        <Cell>
          <Sm><path d="M3 11 C4 5 11 4 15 10" fill="none" stroke="#6ba3bf" strokeWidth="2.2" /><path d="M1 7 L3 13 L8 10 Z" fill="#6ba3bf" /></Sm>
        </Cell>
        <Cell>
          <Sm><path d="M15 11 C14 5 7 4 3 10" fill="none" stroke="#6ba3bf" strokeWidth="2.2" /><path d="M17 7 L15 13 L10 10 Z" fill="#6ba3bf" /></Sm>
        </Cell>
        <Cell>
          <Sm><path d="M9 1 L14 3 L17 9 L14 15 L9 17 L4 15 L1 9 L4 3 Z" fill="none" stroke="#3f9fca" strokeWidth="2" strokeDasharray="5 1.5" /></Sm>
        </Cell>
        <Cell cls="w-[16px]">
          <div className="flex flex-col items-center gap-[1px]">
            <span className="block w-[7px] h-px bg-[#222]" />
            <Arrow />
          </div>
        </Cell>
        <Cell cls="w-[14px]">
          <svg width="7" height="12" viewBox="0 0 7 12"><path d="M7 0 V12 L0 6 Z" fill="#1f83c9" /></svg>
        </Cell>
        <div className="w-[10px] shrink-0" />
        {menu.map(([t, c]) => (
          <div key={t} className={`${c} shrink-0 whitespace-nowrap`}>{t}</div>
        ))}
        <div className="shrink-0 whitespace-nowrap">中望3D 2026 x64&nbsp; - [* guozi001.Z3PRT]</div>
        <div className="ml-auto flex items-center gap-[12px] pr-[5px] mb-[4px]">
          <span className="block w-[8px] h-[4px] border border-[#a8adb3]" />
          <svg width="12" height="12" viewBox="0 0 12 12"><path d="M3 3 V1 H11 V8 H9 M1 3 H9 V11 H1 Z" fill="none" stroke="#a8adb3" /></svg>
          <svg width="12" height="12" viewBox="0 0 12 12"><path d="M1 1 L11 11 M11 1 L1 11" stroke="#a8adb3" strokeWidth="2" /></svg>
        </div>
      </div>
      {/* ribbon tabs */}
      <div className="h-[21px] shrink-0 flex items-stretch">
        <div className="w-[75px] shrink-0 flex items-center justify-center bg-[#2c5eb0] border border-[#1e4a96] text-white">文件(F)</div>
        {tabs.map(([t, c]) =>
          t === "点云" ? (
            <div key={t} className={`${c} shrink-0 -mt-[1px] -mb-[1px] pt-[2px] relative z-10 flex items-center justify-center bg-[#fdfdfd] border border-b-0 border-[#bcc2c9]`}>{t}</div>
          ) : (
            <div key={t} className={`${c} shrink-0 pt-[2px] flex items-center justify-center`}>{t}</div>
          ),
        )}
        <div className="ml-auto flex items-center">
          <svg width="10" height="10" viewBox="0 0 10 10" className="block mr-[8px]"><path d="M1 8 L5 3 L9 8 L7 9 H3 Z" fill="none" stroke="#222" strokeWidth="1.2" /></svg>
          <div className="w-[158px] h-[17px] flex items-center justify-between pl-[2px] pr-[5px] bg-white border border-[#b9bec4] text-[#8b8f94]">
            <span>查找命令</span>
            <svg width="14" height="14" viewBox="0 0 14 14"><circle cx="6" cy="6" r="4.5" fill="none" stroke="#a8adb3" strokeWidth="1.3" /><path d="M9.5 9.5 L13 13" stroke="#6f9fb8" strokeWidth="1.5" /></svg>
          </div>
          <svg width="16" height="16" viewBox="0 0 16 16" className="block ml-[11px]"><circle cx="8" cy="8" r="5" fill="none" stroke="#aeb2b6" strokeWidth="3" strokeDasharray="2.5 1.2" /><circle cx="8" cy="8" r="2" fill="none" stroke="#aeb2b6" /></svg>
          <svg width="16" height="16" viewBox="0 0 16 16" className="block ml-[13px]">
            <circle cx="8" cy="8" r="7.5" fill="#1f4fb8" stroke="#9ab4d8" />
            <text x="8" y="12" textAnchor="middle" fontSize="11" fontWeight="700" fill="#fff" fontFamily="Liberation Sans">?</text>
          </svg>
          <div className="ml-[6px]"><Arrow /></div>
          <span className="block w-[8px] h-[2px] bg-[#333] ml-[11px]" />
          <svg width="10" height="10" viewBox="0 0 10 10" className="block ml-[6px]"><path d="M3 2.5 V1 H9 V7 H7.5 M1 3 H7 V9 H1 Z" fill="none" stroke="#222" strokeWidth="1.2" /></svg>
          <svg width="10" height="10" viewBox="0 0 10 10" className="block ml-[7px] mr-[4px]"><path d="M1 1 L9 9 M9 1 L1 9" stroke="#222" strokeWidth="1.2" /></svg>
        </div>
      </div>
      {/* ribbon */}
      <div className="h-[94px] shrink-0 flex bg-[#fdfdfd] border-y border-[#bcc2c9]">
        {groups.map((g) => (
          <div key={g.label} className={`${g.cls} shrink-0 h-full border-r border-[#cfd3d8] flex flex-col`}>
            <div className="flex h-[74px]">
              {g.items.map(([t, ic, w, drop]) => (
                <div key={t} className={`${w} shrink-0 flex flex-col items-center`}>
                  <div className="h-[38px] flex items-end justify-center">{icons[ic]}</div>
                  <div className="mt-[2px] h-[16px] leading-[16px] whitespace-nowrap">{t}</div>
                  {drop ? (
                    <div className="mt-[6px]">
                      <Arrow />
                    </div>
                  ) : null}
                </div>
              ))}
            </div>
            <div className="flex-1 flex items-center justify-center text-[#7d7d7d] pr-[4px]">{g.label}</div>
          </div>
        ))}
      </div>
      {/* toolbar */}
      <div className="h-[29px] pt-[3px] shrink-0 flex items-center">
        <div className="w-[12px] shrink-0 flex justify-center"><Grip /></div>
        <div className="w-[24px] h-[23px] shrink-0 flex items-center justify-center bg-[#fde48a] border border-[#d9a94a]">
          <Sm><path d="M4 1 V14 L7 11 L10 16 L12 15 L9 10 L13 9 Z" fill="#1f83c9" /><circle cx="12" cy="6" r="3.5" fill="#f6d040" /></Sm>
        </div>
        <Cell><Sm><path d="M7 2 H11 V7 H16 V11 H11 V16 H7 V11 H2 V7 H7 Z" fill="#8fc23e" stroke="#6c9a2c" /></Sm></Cell>
        <Cell><Sm><rect x="2" y="7" width="14" height="4" fill="#c2262e" /></Sm></Cell>
        <Cell cls="w-[28px]"><Sm><rect x="2" y="4" width="12" height="12" fill="none" stroke="#7a8a96" strokeDasharray="2 1.5" /><path d="M8 7 V13 M5 10 H11 M14 1 V6 M11.5 3.5 H16.5" stroke={R} strokeWidth="1.4" /></Sm></Cell>
        <Cell cls="w-[12px]"><Arrow /></Cell>
        <Cell cls="w-[20px]"><Sm><path d="M5 2 H13 L17 9 L13 16 H5 L1 9 Z" fill="none" stroke="#58a8cc" strokeWidth="1.3" strokeDasharray="2 1.2" /></Sm></Cell>
        <TSep cls="ml-[4px]" />
        <Cell cls="w-[25px]"><Sm><rect x="3" y="7" width="3" height="9" fill="#2e9a3a" /><rect x="7" y="5" width="3" height="11" fill="#c2262e" /><rect x="11" y="7" width="3" height="9" fill="#2a6fc0" /><path d="M10 1 H17 L14.5 5 V8 L12.5 7 V5 Z" fill="#1f9ac0" /></Sm></Cell>
        <Combo text="全部" cls="w-[132px]" />
        <div className="w-[23px] h-[23px] ml-[1px] shrink-0 flex items-center justify-center bg-[#fde48a] border border-[#d9a94a]">
          <Sm><path d="M1 8 L9 1 L17 6 V10 L9 17 L1 11 Z" fill="#1a86ad" /><path d="M5 8 L10 4 L15 7 L9 13 Z" fill="#f2c740" /></Sm>
        </div>
        <Combo text="仅有零件" gray cls="w-[132px] ml-px" />
        <Cell>
          <Sm><path d="M3 5 H7 M11 5 H15 M2 10 H16 M5 14 H13" stroke="#a0a4a8" strokeWidth="1.5" /></Sm>
        </Cell>
        <Cell>
          <Sm><circle cx="9" cy="6" r="5" fill="#c4c7ca" /><rect x="3" y="10" width="12" height="5" fill="#a8abae" /></Sm>
        </Cell>
        <TSep cls="ml-[2px]" />
        <div className="w-px shrink-0" />
        {midIcons.map((n, i) => (
          <Cell key={i}>{n}</Cell>
        ))}
        <TSep cls="ml-[2px]" />
        <div className="w-px shrink-0" />
        <Cell><Sm><circle cx="9" cy="9" r="7" fill="none" stroke="#9a9ea3" strokeWidth="1.3" /><path d="M7 4 V13 L9 11 L12 14 L13 12 L10 10 L13 9 Z" fill="#9a9ea3" /></Sm></Cell>
        <Cell><Sm><path d="M5 16 V5 C5 2 9 2 9 5 V8 M9 8 C9 3 13 3 13 6 V16" fill="none" stroke="#9a9ea3" strokeWidth="1.5" /></Sm></Cell>
        <Cell><Sm><rect x="2" y="2" width="14" height="14" fill="#f4f5f6" stroke="#b9bec4" /><rect x="5" y="5" width="8" height="8" fill="#555" /></Sm></Cell>
        <Combo text="单一选择" cls="w-[132px] ml-px" />
        {disabled.map((n, i) => (
          <Cell key={i}>{n}</Cell>
        ))}
        <div className="w-[5px] shrink-0" />
        <Grip />
        <div className="w-[5px] shrink-0" />
        {blue.map((n, i) => (
          <Cell key={i}>{n}</Cell>
        ))}
      </div>
      {/* main */}
      <div className="flex-1 min-h-0 flex">
        {/* manager */}
        <div className="w-[358px] shrink-0 flex flex-col">
          <div className="h-[22px] shrink-0 flex items-center pl-[5px] pr-[7px] text-[12px] text-[#333]">
            <span>管理器</span>
            <svg width="10" height="10" viewBox="0 0 10 10" className="block ml-auto mr-[11px]"><rect x="0.5" y="0.5" width="9" height="9" fill="none" stroke="#777" /><rect x="2.5" y="4" width="5" height="2" fill="#777" /></svg>
            <svg width="11" height="10" viewBox="0 0 11 10" className="block"><path d="M1 1 L10 9 M10 1 L1 9" stroke="#999" strokeWidth="2" /></svg>
          </div>
          <div className="flex-1 min-h-0 flex">
            <div className="w-[31px] shrink-0 flex flex-col items-center">
              <div className="relative z-10 w-[31px] ml-[2px] h-[47px] -mr-[2px] -mt-px shrink-0 bg-white border border-r-0 border-[#bcc2c9] flex items-center justify-center">
                <Ic w={24} h={26}>
                  <path d="M3 7 L9 4 L15 7 L9 10 Z" fill="#a8dced" />
                  <path d="M3 7 L9 10 V17 L3 14 Z" fill="#5ab8d8" />
                  <path d="M15 7 L9 10 V17 L15 14 Z" fill="#3a9dc0" />
                  <path d="M14 11 H22 M7 17 V25 M7 21 H13" stroke="#8a9aa8" />
                  <rect x="15" y="18" width="6" height="5" fill="none" stroke="#8a9aa8" />
                </Ic>
              </div>
              <div className="mt-[8px]">
                <Ic w={24} h={24}>
                  <rect x="1" y="1" width="22" height="22" fill="#cfe9f4" stroke="#4da6c8" />
                  <rect x="1" y="1" width="22" height="4" fill="#4da6c8" />
                  <path d="M12 6 L20 10 L12 14 L4 10 Z" fill="#ffe27a" />
                  <path d="M4 10 L12 14 V21 L4 17 Z" fill="#f3b830" />
                  <path d="M20 10 L12 14 V21 L20 17 Z" fill="#e09a20" />
                </Ic>
              </div>
              <div className="mt-[25px]">
                <Ic w={24} h={24}>
                  <rect x="0" y="0" width="24" height="24" fill="#d6eef8" stroke="#3f9fca" />
                  <path d="M1 16 C6 4 10 8 13 12 C16 9 19 9 23 14 V23 H1 Z" fill="#7cc4de" />
                  <circle cx="17" cy="5.5" r="4" fill="#f0b020" />
                  <path d="M2 16 H10 V13 L15 17 L10 21 V18 H2 Z" fill="#e65a1e" />
                </Ic>
              </div>
              <div className="mt-[26px]">
                <Ic w={24} h={24}>
                  <circle cx="11" cy="8" r="6" fill="#f3b830" />
                  <circle cx="9" cy="9" r="6" fill="#3f9fca" />
                  <path d="M1 23 C1 15 17 15 17 23 Z" fill="#2a88ae" />
                  <path d="M15 15 L23 23 H12 Z" fill="#f0b020" />
                </Ic>
              </div>
            </div>
            <div className="w-[327px] shrink-0 h-full flex flex-col border-2 border-[#bcc2c9] bg-[#eef0f2]">
              <div className="h-[22px] shrink-0 flex">
                <div className="w-[150px] shrink-0 pt-px flex items-center justify-between pl-[3px] pr-[6px] bg-white border-r border-[#bcc2c9]">
                  <span>显示常用</span>
                  <Arrow c="#333" />
                </div>
                <div className="w-[147px] shrink-0 pt-px ml-px flex items-center pl-[2px] bg-white text-[#8b8f94]">按回车键查询</div>
                <div className="flex-1 ml-[2px] flex items-center justify-center bg-white border-l border-[#bcc2c9]">
                  <svg width="16" height="16" viewBox="0 0 16 16"><path d="M0 1 H16 L10 8 V16 L6 14 V8 Z" fill="#1f9ac0" /></svg>
                </div>
              </div>
              <div className="h-[2px] shrink-0" />
              <div className="h-[22px] shrink-0 flex bg-[#eef0f2] border-y border-[#c6cacf]">
                <div className="w-[230px] shrink-0 pt-px pl-[5px] border-r border-[#bcc2c9] flex items-center">特征节点</div>
              </div>
              <div className="flex-1 min-h-0 overflow-hidden flex flex-col bg-[#f4f4f4]">
                <Row i={0}>
                  <div className="ml-[3px]"><Chev /></div>
                  <Ic w={15} h={14}>
                    <g transform="translate(3 0)">
                      <rect x="5" y="1" width="5" height="4" fill="#3f9fca" />
                      <path d="M7.5 5 V8 M2 8 H13 M2 8 V10 M13 8 V10" stroke="#777" />
                      <rect x="0" y="10" width="5" height="4" fill="#3f9fca" />
                      <rect x="10" y="10" width="5" height="4" fill="#3f9fca" />
                    </g>
                  </Ic>
                  <span className="ml-[8px] text-[#25103f]">guozi001</span>
                </Row>
                <Row i={1}>
                  <div className="ml-[17px]"><Chev /></div>
                  <div className="ml-[6px]"><Folder /></div>
                  <span className="ml-[3px]">点块(1)</span>
                </Row>
                <Row i={2}>
                  <div className="ml-[45px]"><Check c="#e0222c" /></div>
                  <div className="ml-[6px]">
                    <Ic w={15} h={15}>
                      <path d="M0 3 L7.5 0 L15 3 L7.5 6 Z" fill="#4fb8da" />
                      <path d="M0 3 L7.5 6 V15 L0 12 Z" fill="#1a86ad" />
                      <path d="M15 3 L7.5 6 V15 L15 12 Z" fill="#0f6488" />
                    </Ic>
                  </div>
                  <span className="ml-[3px]">对正演示<span className="text-[#25103f]">.stl</span></span>
                </Row>
                <Row i={3}>
                  <div className="ml-[17px]"><Chev /></div>
                  <div className="ml-[6px]"><Folder /></div>
                  <span className="ml-[3px]">历史</span>
                </Row>
                <Row i={4}>
                  <div className="ml-[45px]"><Check c="#18a018" /></div>
                  <div className="ml-[6px]">
                    <Ic w={15} h={15}>
                      <path d="M7.5 1 V8" stroke="#2e9a3a" />
                      <path d="M7.5 8 L14 10 M7.5 8 L2 13 M1 9 L14 6" stroke="#d83030" />
                      <path d="M7.5 8 L8 14" stroke="#3a62c8" />
                      <rect x="3" y="0" width="3" height="3" fill="#7a6a6a" />
                      <rect x="11" y="10" width="3" height="3" fill="#c23a4a" />
                    </Ic>
                  </div>
                  <span className="ml-[3px]">默认<span className="text-[#25103f]">CSYS</span></span>
                </Row>
                <Row i={5}>
                  <div className="ml-[47px]">
                    <svg width="15" height="10" viewBox="0 0 15 10" className="block"><path d="M0 5 L6 0 V3 H15 V7 H6 V10 Z" fill="#ee1f2a" /></svg>
                  </div>
                  <span className="ml-[4px] text-[#ee1414] whitespace-pre">----- 建模停止 -----</span>
                </Row>
                {rows.map((i) => (
                  <Row key={i} i={i + 6} />
                ))}
              </div>
              <div className="h-[2px] shrink-0 bg-[#bcc2c9]" />
              <div className="h-[22px] shrink-0 pt-px flex items-center bg-[#fbfbfb]">
                <svg width="8" height="10" viewBox="0 0 8 10" className="block ml-[6px]"><path d="M0 0 L8 5 L0 10 Z" fill="#555b62" /></svg>
                <span className="ml-[5px] font-bold text-[#222]">回放</span>
              </div>
            </div>
          </div>
        </div>
        <div className="w-[3px] shrink-0" />
        {/* document area */}
        <div className="flex-1 min-w-0 flex flex-col">
          <div className="h-[24px] shrink-0 flex relative z-10">
            <div className="w-[154px] shrink-0 h-[24px] flex items-center bg-white border border-b-0 border-[#d0d4d8]">
              <span className="ml-[31px] w-[100px] text-[11px] text-[#333] whitespace-nowrap">* guozi001.Z3PRT</span>
              <svg width="10" height="10" viewBox="0 0 10 10" className="block"><path d="M1 1 L9 9 M9 1 L1 9" stroke="#7a6f50" strokeWidth="2" /></svg>
            </div>
            <svg width="11" height="11" viewBox="0 0 11 11" className="block ml-[7px] self-center"><path d="M5.5 0 V11 M0 5.5 H11" stroke="#9a9a9a" strokeWidth="1.6" /></svg>
            <svg width="10" height="10" viewBox="0 0 10 10" className="block ml-auto mr-[6px] self-center"><path d="M0 1 H9 M0 4 H9 L4.5 9 Z" fill="#9a9a9a" stroke="#9a9a9a" /></svg>
          </div>
          <div className="flex-1 min-h-0 relative bg-white border-t border-[#bcc2c9] -mt-px">
            <div className="h-[25px] mt-[1px] flex items-center pl-[473px]">
              <Sm s={20}><path d="M8 3 H15 V15 H8" fill="none" stroke="#b0b4b8" strokeWidth="1.5" /><path d="M2 9 H10 M5 6 L2 9 L5 12" fill="none" stroke="#b0b4b8" strokeWidth="1.5" /></Sm>
              <div className="ml-1"><Sm s={20}><path d="M1 9 L9 2 L16 5 L12 16 L5 17 Z" fill="#5a7a94" /><path d="M6 7 L11 5 L12 11 L7 13 Z" fill="#bfe0f0" /></Sm></div>
              <div className="ml-0.5"><Arrow /></div>
              <div className="ml-2.5"><Sm s={20}><path d="M5 14 L12 3 L16 6 L9 17 Z" fill="#d84050" /><path d="M5 14 L9 17 L5 17 Z" fill="#c9ccd0" /></Sm></div>
              <div className="ml-1"><Cube s={20} top="#f6d040" left="#58c0a0" right="#2f9ac0" /></div>
              <div className="ml-1.5"><Cube s={20} top="#7acce4" left="#7acce4" right="#1a86ad" /></div>
              <div className="ml-0.5"><Arrow /></div>
              <div className="ml-2"><Sm s={20}><path d="M1 5 L9 2 L17 5 L9 8 Z M1 5 V13 L9 17 V8 M17 5 V13 L9 17" fill="#fff" stroke="#aab2b8" /></Sm></div>
              <div className="ml-[3px]"><Arrow /></div>
              <div className="ml-2"><Cube s={20} top="#f2b030" left="#1a86ad" right="#0f6488" /></div>
              <div className="ml-[3px]"><Arrow /></div>
              <div className="ml-2"><Sm s={20}><rect x="1" y="1" width="16" height="16" fill="#cfe6f0" stroke="#4a90b0" strokeWidth="1.5" /><circle cx="9" cy="9" r="5.5" fill="#f6d870" stroke="#b98a20" /><rect x="6" y="5" width="6" height="7" fill="#e4e6e8" /></Sm></div>
              <div className="ml-[3px]"><Arrow /></div>
              <div className="ml-2"><Sm s={20}><circle cx="9" cy="9" r="5" fill="none" stroke="#d83030" strokeWidth="1.4" strokeDasharray="5 2" /><path d="M9 1 V17 M1 9 H17" stroke="#d83030" /><circle cx="9" cy="13" r="2" fill="#3f9fca" /></Sm></div>
              <div className="ml-[3px]"><Arrow /></div>
              <div className="ml-2"><Sm s={20}><rect x="1" y="2" width="16" height="14" fill="#f0f4f6" stroke="#9ab4c2" /><path d="M3 13 H7 V9" fill="none" stroke="#3f9fca" /><path d="M11 6 H15" stroke="#9ab4c2" strokeDasharray="2 1" /></Sm></div>
              <div className="ml-[3px] w-[38px] h-[23px] shrink-0 flex bg-[#fde48a] border border-[#d9a94a]">
                <div className="w-[21px] flex items-center justify-center border-r border-[#d9a94a]">
                  <Sm><path d="M9 1 V9" stroke="#2e9a3a" strokeWidth="1.4" /><path d="M9 9 L17 12 M9 9 L3 15 M1 10 L17 6" stroke="#d83030" strokeWidth="1.2" /><path d="M9 9 L10 17" stroke="#3a62c8" strokeWidth="1.2" /></Sm>
                </div>
                <div className="flex-1 flex items-center justify-center"><Arrow /></div>
              </div>
              <div className="ml-[3px]"><Sm s={20}><rect x="1" y="1" width="16" height="13" fill="url(#mon)" stroke="#666" /><rect x="5" y="14" width="8" height="3" fill="#888" /></Sm></div>
              <div className="ml-[3px]"><Arrow /></div>
              <div className="ml-2 w-5 flex justify-center"><span className="block w-[15px] h-[7px] bg-black" /></div>
              <div className="ml-[5px] w-5 flex justify-center"><span className="block w-[16px] h-[16px] bg-[#f8980c] border border-[#1f3f7a]" /></div>
              <div className="ml-1.5"><Sm s={20}><path d="M1 8 L9 3 L17 8 L9 13 Z" fill="#70c8b4" /><path d="M1 8 L9 13 V16 L1 11 Z" fill="#3a9dc0" /><path d="M17 8 L9 13 V16 L17 11 Z" fill="#9a9ea3" /></Sm></div>
              <div className="ml-0.5"><Arrow /></div>
              <div className="ml-1.5 w-[114px] h-[21px] shrink-0 flex items-center bg-white border border-[#b9bec4] pl-[5px]">
                <svg width="10" height="15" viewBox="0 0 10 15" className="block shrink-0"><path d="M2 9 C-2 4 3 1 5 1 C7 1 12 4 8 9 L7 11 H3 Z" fill="#fff6c8" stroke="#a08a30" /><rect x="3" y="11" width="4" height="3" fill="#666" /></svg>
                <span className="block ml-[3px] w-[13px] h-[13px] shrink-0 rounded-full bg-[#f6d850] border border-[#8a9ab8]" />
                <span className="ml-[3px]">图层0000</span>
                <div className="ml-auto mr-[6px]"><Arrow c="#333" /></div>
              </div>
            </div>
            <Model />
            <Axis />
            <div className="absolute left-[4px] bottom-[-1px] text-[16px] leading-[24px] text-[#222]">68.1432mm</div>
          </div>
        </div>
      </div>
      {/* status bar */}
      <div className="h-[29px] pt-[2px] shrink-0 flex items-center pl-[6px] border-t border-[#e0e2e5]">
        <span className="text-[#333]">选择命令或实体</span>
        <div className="w-px h-[24px] bg-[#8a8d92] ml-[1377px] shrink-0" />
        <div className="ml-[9px] w-[23px] h-[22px] shrink-0 flex items-center justify-center bg-[#fde48a] border border-[#d9a94a]">
          <Sm s={16}><rect x="1" y="1" width="14" height="14" fill="#cfe0f0" stroke="#3a62a8" /><path d="M7 4 H13 M10 4 V13" stroke="#7a1a2a" strokeWidth="2" /></Sm>
        </div>
        <div className="ml-[11px]"><Sm s={16}><rect x="1" y="2" width="16" height="11" fill="#3cb4d4" stroke="#555" /><rect x="6" y="13" width="6" height="3" fill="#555" /></Sm></div>
        <div className="ml-[15px]"><Sm s={16}><rect x="2" y="2" width="14" height="14" fill="#fff" stroke="#4a7ab8" /><rect x="2" y="2" width="14" height="3" fill="#4a7ab8" /><path d="M4 8 H14 M4 11 H14 M4 13.5 H11" stroke="#7a8a96" /></Sm></div>
        <div className="ml-[12px] w-[350px] h-[21px] shrink-0 flex items-center pl-[4px] bg-white border border-[#b9bec4] text-[11.5px]">
          <span>!CdStl2Faces</span>
          <span className="block w-px h-[13px] bg-black" />
        </div>
      </div>
      <div className="h-[4px] shrink-0 flex bg-[#1c232c]">
        <div className="ml-[345px] w-[48px] bg-[#3c434c]" />
      </div>

      {/* annotation overlays */}
      <div className="absolute left-[1488px] top-[895px] text-[23px] leading-[28px] font-bold whitespace-nowrap text-[#f5060a] [font-family:'Liberation_Sans','Noto_Sans_CJK_SC',sans-serif] [text-shadow:0_0_2px_#fff,1px_1px_1px_#fff,-1px_-1px_1px_#fff,1px_-1px_1px_#fff,-1px_1px_1px_#fff,3px_3px_3px_#777]">
        输入：<span className="text-[22px]">!CdStl2Faces</span>，回车。
      </div>
      <div className="absolute left-[1750px] top-[1009px] w-[170px] h-[21px] bg-white border-y border-l border-[#d8dadd]" />
      <svg width="60" height="100" viewBox="0 0 60 100" className="absolute left-[1630px] top-[930px]">
        <line x1="48" y1="7" x2="25" y2="72" stroke="#f5060a" strokeWidth="3" />
        <circle cx="48" cy="7" r="4.5" fill="#f5060a" />
        <path d="M17 71 C27 73 27 88 17 90 Z" fill="#f5060a" />
        <path d="M25 74 L33 79 L25 80 Z" fill="#f5060a" />
      </svg>
      <svg width="12" height="18" viewBox="0 0 12 18" className="absolute left-[1663px] top-[1012px]">
        <path d="M2 1 H5 L6 2 L7 1 H10 M6 2 V16 M2 17 H5 L6 16 L7 17 H10" fill="none" stroke="#111" strokeWidth="1.1" />
      </svg>
      <div className="absolute left-[1587px] top-[992px] text-[35px] leading-[42px] whitespace-nowrap text-[#ffffff66] [-webkit-text-stroke:1px_rgba(120,120,120,0.6)] [font-family:'Liberation_Sans','Noto_Sans_CJK_SC',sans-serif]">
        CSDN @心诚的文字
      </div>
      <div className="absolute left-[1717px] top-[1005px] flex items-center">
        <svg width="22" height="23" viewBox="0 0 22 23" className="block shrink-0">
          <rect x="0" y="0" width="22" height="23" rx="4" fill="#ee5a24" />
          <path d="M16 5 C10 3 5 5 7 9 C9 12 15 11 16 14 C16 18 9 19 5 16" fill="none" stroke="#fff" strokeWidth="2.4" />
        </svg>
        <svg width="20" height="16" viewBox="0 0 20 16" className="block ml-[7px]">
          <path d="M2 4 H18 V11 H2 Z M10 0 V16" fill="none" stroke="#1f74c8" strokeWidth="2.4" />
        </svg>
        <svg width="12" height="14" viewBox="0 0 12 14" className="block ml-[6px]">
          <circle cx="3" cy="3" r="1.8" fill="#1f74c8" />
          <path d="M8 9 L10 7 L9 12 L5 13 Z" fill="#1f74c8" />
        </svg>
        <svg width="20" height="20" viewBox="0 0 20 20" className="block ml-[5px]">
          <circle cx="10" cy="10" r="8" fill="#fff" stroke="#6aa6d8" strokeWidth="1.6" />
          <circle cx="7" cy="8" r="1.2" fill="#1f74c8" />
          <circle cx="13" cy="8" r="1.2" fill="#1f74c8" />
          <path d="M6 12 C8 15 12 15 14 12" fill="none" stroke="#1f74c8" strokeWidth="1.4" />
        </svg>
        <svg width="14" height="18" viewBox="0 0 14 18" className="block ml-[7px]">
          <rect x="4" y="0" width="6" height="11" rx="3" fill="#1f74c8" />
          <path d="M1 7 C1 14 13 14 13 7 M7 13 V17 M3 17 H11" fill="none" stroke="#1f74c8" strokeWidth="1.5" />
        </svg>
        <svg width="20" height="14" viewBox="0 0 20 14" className="block ml-[7px]">
          <rect x="0.8" y="0.8" width="18.4" height="12.4" rx="1" fill="#fff" stroke="#1f74c8" strokeWidth="1.6" />
          <path d="M3 4 H17 M3 7 H17" stroke="#1f74c8" strokeWidth="1.3" strokeDasharray="1.5 1" />
          <path d="M5 10 H15" stroke="#1f74c8" strokeWidth="1.4" />
        </svg>
        <svg width="18" height="18" viewBox="0 0 18 18" className="block ml-[5px]">
          <circle cx="6" cy="5" r="3.5" fill="#a8c4d8" />
          <path d="M1 14 C1 9 11 9 11 14 Z" fill="#a8c4d8" />
          <text x="13" y="17" textAnchor="middle" fontSize="7" fill="#88a0b4" fontFamily="Liberation Sans">10</text>
        </svg>
        <svg width="16" height="16" viewBox="0 0 16 16" className="block ml-[2px]">
          <path d="M0 2 L5 0 H11 L16 2 L14 6 H13 V16 H3 V6 H2 Z" fill="#1f74c8" />
        </svg>
        <svg width="14" height="14" viewBox="0 0 14 14" className="block ml-[4px]">
          <rect x="0" y="0" width="6" height="6" fill="#1f74c8" />
          <rect x="8" y="0" width="6" height="6" fill="#1f74c8" />
          <rect x="0" y="8" width="6" height="6" fill="#1f74c8" />
          <rect x="8" y="8" width="6" height="6" fill="#1f74c8" />
        </svg>
      </div>
    </div>
  );
}
